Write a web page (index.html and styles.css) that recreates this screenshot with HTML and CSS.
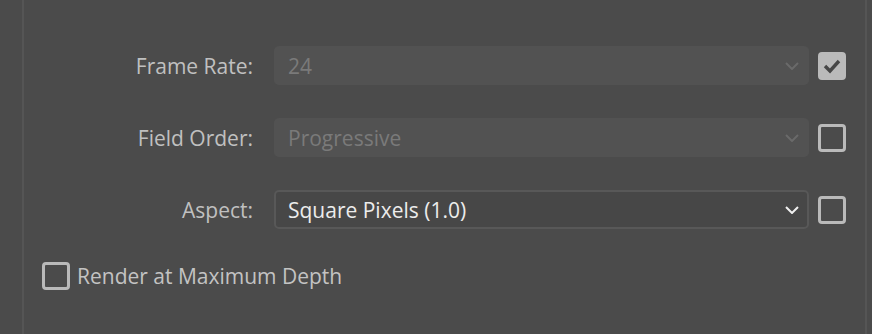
FILE: index.html
```html
<!DOCTYPE html>
<html>
<head>
<meta charset="utf-8">
<link rel="stylesheet" href="styles.css">
</head>
<body>
<div class="panel">
  <div class="row">
    <div class="label">Frame Rate:</div>
    <div class="select disabled"><span>24</span>
      <svg class="chev" width="14" height="8" viewBox="0 0 14 8"><path d="M1 1 L7 7 L13 1" fill="none" stroke="currentColor" stroke-width="2"/></svg>
    </div>
    <div class="cb checked"><svg width="20" height="16" viewBox="0 0 20 16"><path d="M3 8 L8 13 L17 3" fill="none" stroke="#474747" stroke-width="3.4"/></svg></div>
  </div>
  <div class="row">
    <div class="label">Field Order:</div>
    <div class="select disabled"><span>Progressive</span>
      <svg class="chev" width="14" height="8" viewBox="0 0 14 8"><path d="M1 1 L7 7 L13 1" fill="none" stroke="currentColor" stroke-width="2"/></svg>
    </div>
    <div class="cb"></div>
  </div>
  <div class="row">
    <div class="label">Aspect:</div>
    <div class="select active"><span>Square Pixels (1.0)</span>
      <svg class="chev" width="14" height="8" viewBox="0 0 14 8"><path d="M1 1 L7 7 L13 1" fill="none" stroke="currentColor" stroke-width="2"/></svg>
    </div>
    <div class="cb"></div>
  </div>
  <div class="render">
    <div class="cb"></div>
    <span>Render at Maximum Depth</span>
  </div>
</div>
</body>
</html>
```
FILE: styles.css
```css
html, body {
  margin: 0;
  padding: 0;
  background: #4b4b4b;
  height: 100%;
  overflow: hidden;
}
.panel {
  margin-left: 22px;
  width: 845px;
  height: 334px;
  border-left: 2px solid #555555;
  border-right: 2px solid #555555;
  padding-top: 46px;
  box-sizing: border-box;
  font-family: "Open Sans", "Liberation Sans", sans-serif;
  font-size: 21px;
  color: #bdbdbd;
}
.row {
  display: flex;
  align-items: center;
  height: 39px;
  margin-bottom: 33px;
}
.label {
  width: 229px;
  text-align: right;
  margin-right: 21px;
  color: #c0c0c0;
}
.select {
  width: 535px;
  height: 39px;
  box-sizing: border-box;
  border-radius: 5px;
  display: flex;
  align-items: center;
  justify-content: space-between;
  padding: 0 10px 0 14px;
  margin-right: 9px;
}
.select.disabled {
  background: #525252;
  color: #7a7a7a;
}
.select.disabled .chev { color: #6a6a6a; }
.select.active {
  background: #474747;
  border: 2px solid #585858;
  color: #ececec;
  padding-left: 12px;
  padding-right: 8px;
}
.select.active .chev { color: #efefef; }
.cb {
  width: 28px;
  height: 28px;
  box-sizing: border-box;
  border: 3px solid #bababa;
  border-radius: 4px;
  display: flex;
  align-items: center;
  justify-content: center;
  flex: none;
}
.cb.checked {
  background: #bababa;
}
.render {
  display: flex;
  align-items: center;
  margin-left: 18px;
  height: 28px;
}
.render span {
  margin-left: 7px;
  color: #c3c3c3;
}
```
